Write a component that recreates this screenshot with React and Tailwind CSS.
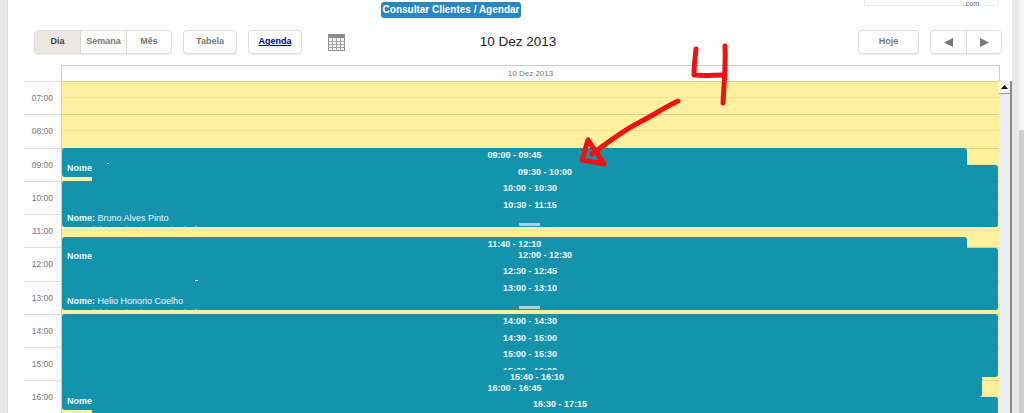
import React from 'react';

const hours = ['07:00', '08:00', '09:00', '10:00', '11:00', '12:00', '13:00', '14:00', '15:00', '16:00'];

// posição dos eventos em relação à grade (x-62, y-81), como no calendário original
const events = [
  { box: 'top-[67px] left-0 w-[905px] h-[29px]', times: ['09:00 - 09:45'], nome: '', sub: true },
  { box: 'top-[84px] left-[30px] w-[906px] h-[62px]', times: ['09:30 - 10:00'] },
  { box: 'top-[100px] left-0 w-[936px] h-[46px]', times: ['10:00 - 10:30', '10:30 - 11:15'], nome: 'Bruno Alves Pinto', nomeTop: 'mt-[-2px]', sub: true, handle: 'left-[457px] top-[42px]' },
  { box: 'top-[156px] left-0 w-[905px] h-[40px]', times: ['11:40 - 12:10'], nome: '', nomeTop: 'mt-[-4px]' },
  { box: 'top-[167px] left-[30px] w-[906px] h-[62px]', times: ['12:00 - 12:30'] },
  { box: 'top-[183px] left-0 w-[936px] h-[46px]', times: ['12:30 - 12:45', '13:00 - 13:10'], nome: 'Helio Honorio Coelho', nomeTop: 'mt-[-2px]', sub: true, handle: 'left-[457px] top-[42px]' },
  { box: 'top-[233px] left-0 w-[936px] h-[63px]', times: ['14:00 - 14:30', '14:30 - 15:00', '15:00 - 15:30', '15:30 - 16:00'] },
  { box: 'top-[285px] left-0 w-[40px] h-[20px]', times: [] },
  { box: 'top-[289px] left-[30px] w-[890px] h-[27px]', times: ['15:40 - 16:10'], shift: 'mt-[-0.5px]' },
  { box: 'top-[300px] left-0 w-[905px] h-[29px]', times: ['16:00 - 16:45'], nome: '', sub: true },
  { box: 'top-[316px] left-[30px] w-[906px] h-[40px]', times: [] },
  { box: 'top-[316px] left-[60px] w-[876px] h-[40px]', times: ['16:30 - 17:15'] },
];

const btn = 'flex items-center justify-center h-[24px] border border-[#dcdcdc] rounded-[4px] bg-white text-[9px] text-[#777777] shadow-[0_1px_1px_rgba(0,0,0,0.08)]';

const CalendarEvent = ({ ev }) => (
  <div className={`absolute ${ev.box} bg-[#1593ad] rounded-[3px] overflow-hidden text-[9px] text-[#eef8fa]`}>
    {ev.times.map((t) => (
      <div key={t} className={`h-[16.6px] leading-[15px] text-center font-bold ${ev.shift || ''}`}>{t}</div>
    ))}
    {ev.nome !== undefined && (
      <div className={`${ev.nomeTop || 'mt-[-3px]'} pl-[5px] h-[13px] leading-[13px] whitespace-nowrap`}>
        <b>Nome:</b> {ev.nome}
      </div>
    )}
    {ev.sub && (
      <div className="pl-[5px] leading-[11px] whitespace-nowrap text-[#b9dde5]">Consultório: primeira 15 Dias/mês</div>
    )}
    {ev.handle && <div className={`absolute ${ev.handle} w-[21px] h-[3px] bg-[#a5d3de]`}></div>}
  </div>
);

const App = () => {
  return (
    <div className="relative flex w-[1024px] h-[413px] overflow-hidden bg-white font-['Liberation_Sans',Arial,sans-serif]">
      <div className="w-2 shrink-0 bg-[#e9e9e9] border-r border-[#dddddd]"></div>

      <div className="w-[1004px] shrink-0">
        <div className="flex items-start h-[30px]">
          <div className="ml-[373px] mt-[2px] w-[140px] h-[16px] rounded-[3px] bg-[#2a86c0] text-white text-[10px] font-bold leading-[16px] text-center whitespace-nowrap">
            Consultar Clientes / Agendar
          </div>
          <div className="ml-auto mr-[14px] w-[134px] h-[6px] border-b border-x border-[#eeeeee] text-[7px] leading-[7px] text-[#666666] text-right pr-[18px]">
            .com
          </div>
        </div>

        <div className="flex items-center h-[24px]">
          <div className="ml-[26px] flex w-[138px] h-[24px] border border-[#dcdcdc] rounded-[4px] text-[9px] text-[#777777] overflow-hidden shadow-[0_1px_1px_rgba(0,0,0,0.08)]">
            <div className="w-[46px] flex items-center justify-center bg-[#ebe8e3] text-[#444444] font-bold border-r border-[#dcdcdc]">Dia</div>
            <div className="w-[46px] flex items-center justify-center font-bold border-r border-[#dcdcdc]">Semana</div>
            <div className="flex-1 flex items-center justify-center font-bold">Mês</div>
          </div>
          <div className={`${btn} ml-[11px] w-[54px] font-bold`}>Tabela</div>
          <div className={`${btn} ml-[11px] w-[54px] font-bold`}>
            <span className="text-[#00008b] underline">Agenda</span>
          </div>
          <svg className="ml-[26px]" width="17" height="17" viewBox="0 0 17 17">
            <rect x="0.5" y="0.5" width="16" height="16" fill="#f4f4f4" stroke="#8c8c8c" />
            <rect x="0" y="0" width="17" height="4" fill="#8c8c8c" />
            <path d="M4.5 4v13M8.5 4v13M12.5 4v13M0 7.5h17M0 10.5h17M0 13.5h17" stroke="#a5a5a5" fill="none" />
          </svg>
          <div className="w-[346px] text-center text-[13.5px] text-[#222222]">10 Dez 2013</div>
          <div className={`${btn} ml-[167px] w-[61px] font-bold`}>Hoje</div>
          <div className="ml-[11px] flex w-[72px] h-[24px] border border-[#dcdcdc] rounded-[4px] shadow-[0_1px_1px_rgba(0,0,0,0.08)]">
            <div className="w-[36px] flex items-center justify-center border-r border-[#dcdcdc]">
              <svg width="9" height="9" viewBox="0 0 9 9"><path d="M9 0v9L0 4.5z" fill="#777777" /></svg>
            </div>
            <div className="flex-1 flex items-center justify-center">
              <svg width="9" height="9" viewBox="0 0 9 9"><path d="M0 0v9l9-4.5z" fill="#777777" /></svg>
            </div>
          </div>
        </div>

        <div className="mt-[11px] ml-[53px] w-[939px] h-[16px] border border-b-0 border-[#cccccc] text-center text-[8px] leading-[16px] text-[#777777]">
          10 Dez 2013
        </div>

        <div className="flex">
          <div className="ml-[16px] w-[37px] shrink-0">
            {hours.map((h) => (
              <div key={h} className="h-[33.25px] border-t border-[#dddddd] text-right pr-[8px] text-[8.5px] leading-[33px] text-[#777777]">{h}</div>
            ))}
          </div>

          <div className="relative w-[938px] shrink-0 border-l border-[#cccccc]">
            {hours.map((h) => (
              <div key={h} className="h-[33.25px] bg-[#fff09e] border-t border-[#d8cd8e]">
                <div className="h-[16px] border-b border-[#f0e28f]"></div>
              </div>
            ))}
            {events.map((ev, i) => (
              <CalendarEvent key={i} ev={ev} />
            ))}
            <div className="absolute top-[82px] left-[45px] w-[2px] h-[1px] bg-white"></div>
            <div className="absolute top-[199px] left-[133px] w-[3px] h-[1px] bg-white"></div>
          </div>

          <div className="w-[13px] shrink-0 bg-[#e8ecf3] border-r-2 border-[#8a8a8a]">
            <div className="h-[13px] bg-[#f2f2f2] border-b border-[#999999] flex items-center justify-center">
              <svg width="7" height="4" viewBox="0 0 7 4"><path d="M0 4h7L3.5 0z" fill="#111111" /></svg>
            </div>
          </div>
        </div>
      </div>

      <div className="flex-1 flex">
        <div className="w-[7px] bg-[#e9e9e9]"></div>
        <div className="flex-1 bg-[#f3f3f3]">
          <div className="mt-[130px] h-[283px] bg-[#cfcfcf]"></div>
        </div>
      </div>

      {/* anotação à mão por cima da tela */}
      <svg className="absolute left-0 top-0 pointer-events-none" width="1024" height="413" viewBox="0 0 1024 413">
        <g fill="none" stroke="#ee1212" strokeLinecap="round" strokeLinejoin="round">
          <path d="M696 49C695 58 694 66 694 75C704 76 714 75 725 75" strokeWidth="5" />
          <path d="M725 46C726 65 724 84 723 103" strokeWidth="5" />
          <path d="M678 101C665 107 652 116 640 122C622 131 606 144 592 154" strokeWidth="5" />
          <path d="M588 140L582 160L604 164Z" strokeWidth="5" />
        </g>
      </svg>
    </div>
  );
};

export default App;
